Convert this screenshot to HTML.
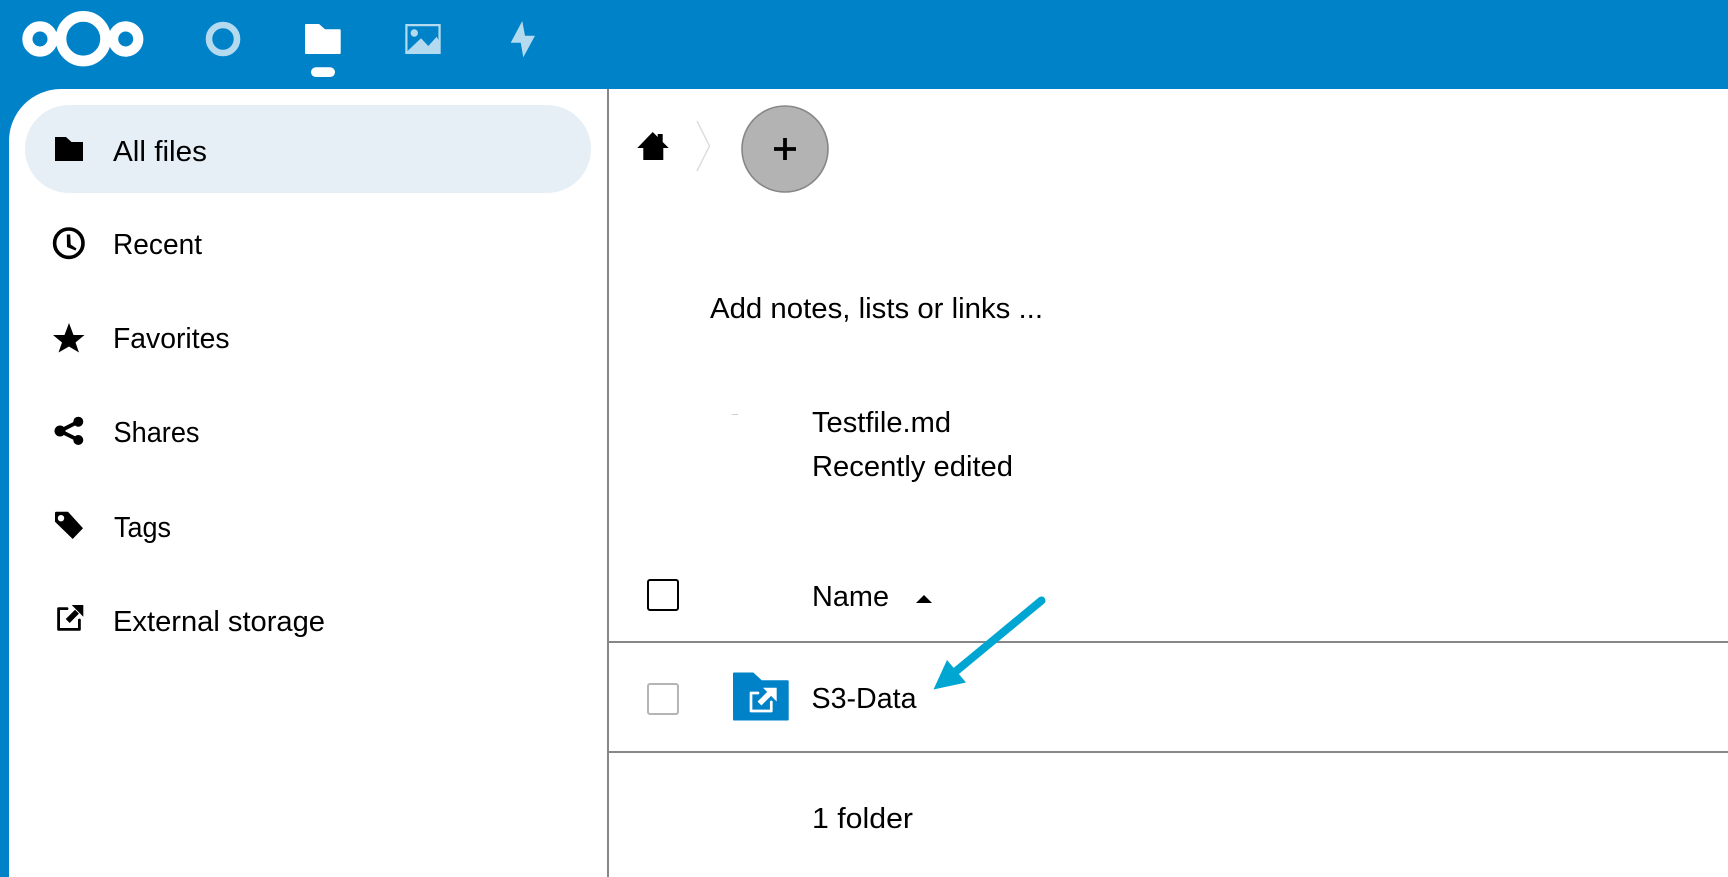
<!DOCTYPE html>
<html lang="en">
<head>
<meta charset="utf-8">
<title>Files</title>
<style>
html,body{margin:0;padding:0;width:1728px;height:877px;overflow:hidden;background:#fff}
svg{display:block}
text{font-family:"Liberation Sans",Arial,sans-serif;font-size:29px;fill:#000}
</style>
</head>
<body>
<svg width="1728" height="877" viewBox="0 0 1728 877" xmlns="http://www.w3.org/2000/svg">
<!-- header + left strip -->
<rect width="1728" height="877" fill="#0082c9"/>
<path d="M9 877V141A52 52 0 0 1 61 89H1728V877Z" fill="#fff"/>

<!-- logo -->
<g fill="none" stroke="#fff">
<circle cx="40" cy="39" r="12.600" stroke-width="10.200"/>
<circle cx="83.300" cy="38.700" r="22.300" stroke-width="10.700"/>
<circle cx="125.700" cy="39" r="12.600" stroke-width="10.200"/>
</g>

<!-- nav icons -->
<circle cx="223" cy="39" r="14" fill="none" stroke="#b3daef" stroke-width="6.600"/>
<path d="M305 25Q305 24 306 24H319L325 29.300H339.700Q340.700 29.300 340.700 30.300V53Q340.700 54 339.700 54H306Q305 54 305 53Z" fill="#fff"/>
<rect x="311" y="67.300" width="24" height="9.700" rx="4.850" fill="#fff"/>
<path fill-rule="evenodd" d="M405.300 24H440.700V54H405.300ZM407.500 26.300V51L421 38.300L428.300 46L436.700 36.700L438.400 40V26.300ZM414.300 29.300A3.700 3.700 0 1 0 414.300 36.700A3.700 3.700 0 1 0 414.300 29.300Z" fill="#b3daef"/>
<path d="M522.300 21L510.700 42.700H520.700L523.300 57.300L535 35.700H525Z" fill="#b3daef"/>

<!-- sidebar border -->
<rect x="607" y="89" width="2" height="788" fill="#878787"/>

<!-- active item -->
<rect x="25" y="105" width="566" height="88" rx="44" fill="#e5eff5"/>

<!-- sidebar icons -->
<path d="M55 137H66L71.500 142H83V161H55Z"/>
<circle cx="68.800" cy="243.200" r="14.200" fill="none" stroke="#000" stroke-width="3.600"/>
<path d="M66.800 234.500H70.200L70.700 244.500L76.500 248.500L75.500 250.500L67 247Z"/>
<path d="M69 323L73.500 335H84.500L75.500 342.500L79 352.500L69 346.500L58.500 352.500L62 342.500L53 335H64.500Z"/>
<g>
<circle cx="60" cy="431" r="5.500"/><circle cx="78.300" cy="421.700" r="5"/><circle cx="78.300" cy="440" r="5"/>
<path d="M78.300 421.700L60 431L78.300 440" fill="none" stroke="#000" stroke-width="3.800"/>
</g>
<path fill-rule="evenodd" d="M55 513Q55 511.700 56.300 511.700H68L83 528.300L72.700 539L55 521.700ZM61 515A3.200 3.200 0 1 0 61 521.400A3.200 3.200 0 1 0 61 515Z"/>
<path d="M67 608.600H58.600V629.400H79.400V620" fill="none" stroke="#000" stroke-width="2.800" stroke-linejoin="round" stroke-linecap="round"/>
<path d="M71.700 605H83.300V616.700Z"/>
<path d="M67.700 621L77 611.700" stroke="#000" stroke-width="5.500" fill="none"/>

<!-- sidebar labels -->
<text x="113" y="161" textLength="94" lengthAdjust="spacingAndGlyphs">All files</text>
<text x="113" y="254" textLength="89" lengthAdjust="spacingAndGlyphs">Recent</text>
<text x="113" y="348" textLength="116.500" lengthAdjust="spacingAndGlyphs">Favorites</text>
<text x="113.500" y="442" textLength="86" lengthAdjust="spacingAndGlyphs">Shares</text>
<text x="114" y="537" textLength="57" lengthAdjust="spacingAndGlyphs">Tags</text>
<text x="113" y="631" textLength="212" lengthAdjust="spacingAndGlyphs">External storage</text>

<!-- breadcrumb -->
<path d="M637.300 148L652.700 132L657.700 137V134H662.700V142L668.700 148H663.300V160H643.300V148Z"/>
<path d="M697 121L709.500 146L697 171" fill="none" stroke="#dcdcdc" stroke-width="1.400"/>
<circle cx="785" cy="149" r="43" fill="#b3b3b3" stroke="#878787" stroke-width="1.600"/>
<path d="M774 149H796M785 138V160" stroke="#000" stroke-width="3.800" fill="none"/>

<!-- notes -->
<text x="710" y="318" textLength="333" lengthAdjust="spacingAndGlyphs">Add notes, lists or links ...</text>
<rect x="732" y="414" width="6" height="1" fill="#d0d0d0"/>
<text x="812" y="432" textLength="139" lengthAdjust="spacingAndGlyphs">Testfile.md</text>
<text x="812" y="476" textLength="201" lengthAdjust="spacingAndGlyphs">Recently edited</text>

<!-- table head -->
<rect x="648" y="580" width="30" height="30" rx="2" fill="#fff" stroke="#000" stroke-width="2"/>
<text x="812" y="606" textLength="77" lengthAdjust="spacingAndGlyphs">Name</text>
<path d="M916 603L924 595L932 603Z"/>
<rect x="609" y="641" width="1119" height="2" fill="#878787"/>

<!-- row -->
<rect x="648" y="684" width="30" height="30" rx="2" fill="#fff" stroke="#b5b5b5" stroke-width="2"/>
<path d="M733 673.500Q733 672.500 734 672.500H753.300L761.700 680.300H787.700Q788.700 680.300 788.700 681.300V719.500Q788.700 720.500 787.700 720.500H734Q733 720.500 733 719.500Z" fill="#0082c9"/>
<path d="M758 693H751V711H771.300V702" fill="none" stroke="#fff" stroke-width="2.700" stroke-linejoin="round" stroke-linecap="round"/>
<path d="M763 687.700H776.700V701.500Z" fill="#fff"/>
<path d="M759.500 703.500L770 693" stroke="#fff" stroke-width="5.500" fill="none"/>
<text x="811.500" y="708" textLength="105" lengthAdjust="spacingAndGlyphs">S3-Data</text>
<rect x="609" y="751" width="1119" height="2" fill="#878787"/>

<!-- summary -->
<text x="812" y="828" textLength="101" lengthAdjust="spacingAndGlyphs">1 folder</text>

<!-- annotation arrow -->
<path d="M1041.500 600.500L955 672" stroke="#00a6d2" stroke-width="8" stroke-linecap="round" fill="none"/>
<path d="M933.500 689.500L947 660L966 682.500Z" fill="#00a6d2"/>
</svg>
</body>
</html>
